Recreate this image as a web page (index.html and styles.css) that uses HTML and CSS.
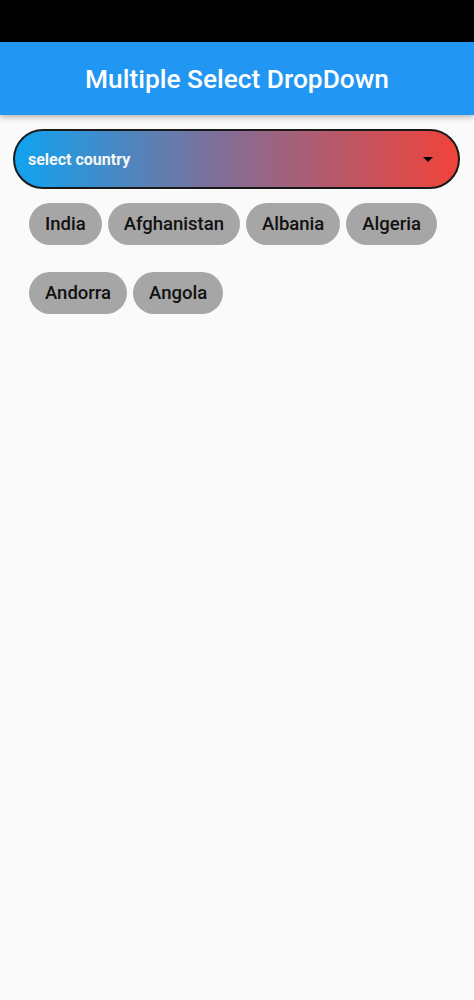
FILE: index.html
```html
<!DOCTYPE html>
<html>
<head>
<meta charset="utf-8">
<link rel="stylesheet" href="styles.css">
</head>
<body>
<div class="status"></div>
<header class="appbar"><h1 class="title">Multiple Select DropDown</h1></header>
<main class="content">
  <div class="dropdown">
    <span class="dd-label">select country</span>
    <svg class="dd-arrow" width="10" height="5" viewBox="0 0 10 5"><path d="M0 0h10L5 5z" fill="#000"/></svg>
  </div>
  <div class="chips">
    <span class="chip">India</span>
    <span class="chip">Afghanistan</span>
    <span class="chip">Albania</span>
    <span class="chip">Algeria</span>
    <span class="chip">Andorra</span>
    <span class="chip">Angola</span>
  </div>
</main>
</body>
</html>
```
FILE: styles.css
```css
html, body {
  margin: 0;
  padding: 0;
  background: #fafafa;
  font-family: Roboto, "Liberation Sans", sans-serif;
  width: 474px;
  height: 1000px;
  overflow: hidden;
}
.status {
  height: 42px;
  background: #000;
}
.appbar {
  height: 73px;
  background: #2196F3;
  display: flex;
  align-items: center;
  justify-content: center;
  box-shadow: 0 2px 6px rgba(0,0,0,0.3);
  position: relative;
  z-index: 1;
}
.title {
  margin: 0;
  color: #fff;
  font-size: 26.3px;
  font-weight: 500;
  letter-spacing: 0;
}
.content {
  padding: 14px 14px 0 13px;
}
.dropdown {
  height: 56px;
  border: 2px solid #1a1a1a;
  border-radius: 32px;
  background: linear-gradient(to right, #10a3f0, #8a6a90 50%, #f0433a);
  display: flex;
  align-items: center;
  padding: 0 25px 0 13px;
  justify-content: space-between;
}
.dd-label {
  color: #f6f6f6;
  font-weight: 700;
  font-size: 16px;
}
.chips {
  display: flex;
  flex-wrap: wrap;
  column-gap: 6px;
  row-gap: 27px;
  padding: 14px 0 0 16px;
}
.chip {
  height: 42px;
  box-sizing: border-box;
  display: inline-flex;
  align-items: center;
  padding: 0 16px;
  background: #a6a6a6;
  border-radius: 21px;
  font-size: 18.5px;
  font-weight: 500;
  color: #111;
}
```
